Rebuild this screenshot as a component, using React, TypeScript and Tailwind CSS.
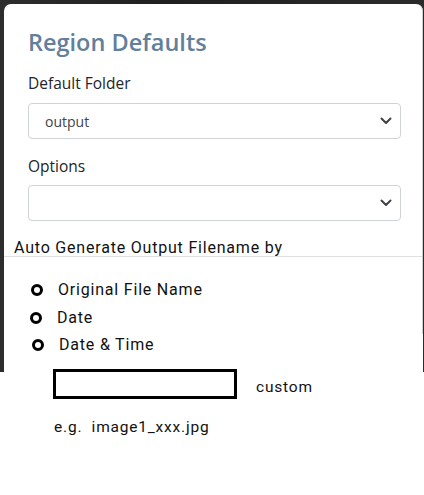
import React from "react";

function Chevron() {
  return (
    <svg width="12" height="8" viewBox="0 0 12 8" fill="none" className="shrink-0">
      <path d="M1.5 1.5 6 6l4.5-4.5" stroke="#3f4349" strokeWidth="2" strokeLinecap="round" strokeLinejoin="round" />
    </svg>
  );
}

function SelectBox({ value }: { value?: string }) {
  return (
    <div className="flex h-[36px] w-[373px] items-center justify-between rounded-[4px] border border-[#cfd3d7] bg-white pl-[16px] pr-[8px] text-[14px] text-[#444]">
      <span>{value}</span>
      <Chevron />
    </div>
  );
}

function Radio({ label, offset }: { label: string; offset: string }) {
  return (
    <div className={`flex items-center leading-[20px] ${offset}`}>
      <span className="h-[12px] w-[12px] shrink-0 rounded-full border-[3px] border-black" />
      <span className="ml-[15px] text-[16px] text-[#111]">{label}</span>
    </div>
  );
}

export default function App() {
  return (
    <div className="relative min-h-[495px] w-[424px] overflow-hidden bg-white">
      <div className="absolute left-0 top-0 h-[372px] w-full bg-[linear-gradient(90deg,#2d2d2d,#1f1f1f_40%,#2b2b2b)]" />
      <div className="relative ml-[4px] mt-[4px] w-[419px] rounded-t-[7px] bg-white pb-[40px] font-['Open_Sans',sans-serif]">
        <div className="rounded-tr-[7px] border-r border-[#cfcfcf] pb-[6px]">
          <div className="pl-[24px] pt-[22px]">
            <h2 className="text-[23.5px] font-semibold leading-[32px] text-[#62809b]">Region Defaults</h2>
            <div className="mt-[14px] text-[15.5px] leading-[22px] text-[#212529]">Default Folder</div>
            <div className="mt-[9px]">
              <SelectBox value="output" />
            </div>
            <div className="mt-[16px] text-[15.5px] leading-[22px] text-[#212529]">Options</div>
            <div className="mt-[8px]">
              <SelectBox />
            </div>
          </div>
          <div className="mt-[18px] border-b border-[#e0e0e0] pl-[10px] font-['Roboto',sans-serif] text-[16px] leading-[17px] tracking-[0.8px] text-[#111]">
            Auto Generate Output Filename by
          </div>
          <div className="mt-[23px] flex flex-col font-['Roboto',sans-serif] tracking-[0.8px]">
            <Radio label="Original File Name" offset="ml-[27px]" />
            <div className="mt-[8px]">
              <Radio label="Date" offset="ml-[26px]" />
            </div>
          </div>
        </div>
        <div className="font-['Roboto',sans-serif] tracking-[0.8px]">
          <div className="mt-[1px]">
            <Radio label="Date & Time" offset="ml-[28px]" />
          </div>
          <div className="ml-[49px] mt-[13px] flex items-center">
            <div className="h-[30px] w-[184px] border-[3px] border-black" />
            <span className="ml-[19px] mt-[8px] text-[15.5px] text-[#111]">custom</span>
          </div>
          <div className="ml-[50px] mt-[17px] text-[15.5px] text-[#111]">
            e.g.&nbsp;&nbsp;image1_xxx.jpg
          </div>
        </div>
      </div>
    </div>
  );
}
